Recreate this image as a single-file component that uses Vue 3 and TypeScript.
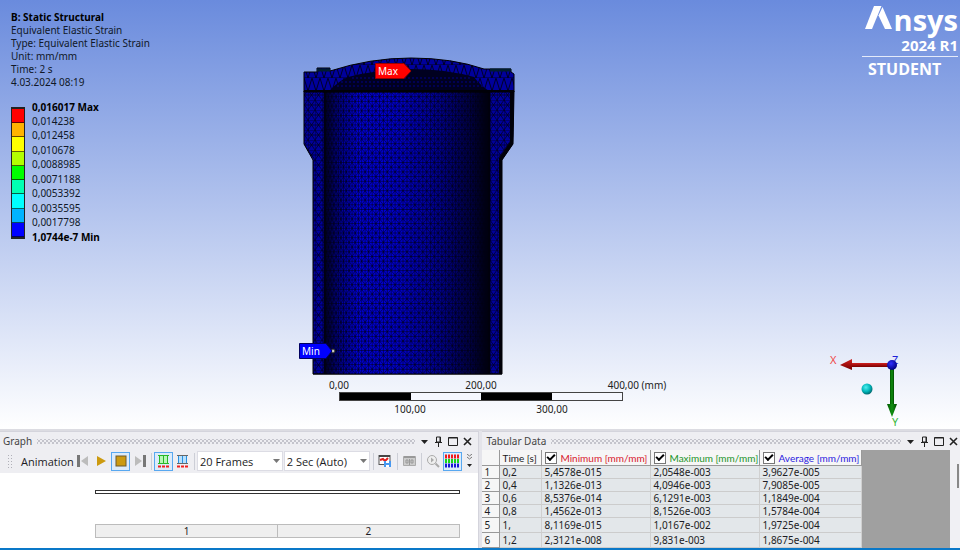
<script setup lang="ts">
import { ref } from 'vue'

interface Band { color: string; label: string }
interface Row { time: string; min: string; max: string; avg: string }

const bands: Band[] = [
  { color: '#ff0000', label: '0,014238' },
  { color: '#ffb300', label: '0,012458' },
  { color: '#ffff00', label: '0,010678' },
  { color: '#b3ff00', label: '0,0088985' },
  { color: '#00ff00', label: '0,0071188' },
  { color: '#00ffb3', label: '0,0053392' },
  { color: '#00ffff', label: '0,0035595' },
  { color: '#00b3ff', label: '0,0017798' },
  { color: '#0000ff', label: '' },
]

const rows: Row[] = [
  { time: '0,2', min: '5,4578e-015', max: '2,0548e-003', avg: '3,9627e-005' },
  { time: '0,4', min: '1,1326e-013', max: '4,0946e-003', avg: '7,9085e-005' },
  { time: '0,6', min: '8,5376e-014', max: '6,1291e-003', avg: '1,1849e-004' },
  { time: '0,8', min: '1,4562e-013', max: '8,1526e-003', avg: '1,5784e-004' },
  { time: '1,', min: '8,1169e-015', max: '1,0167e-002', avg: '1,9725e-004' },
  { time: '1,2', min: '2,3121e-008', max: '9,831e-003', avg: '1,8675e-004' },
]

const frames = ref('20 Frames')
const duration = ref('2 Sec (Auto)')
const showMin = ref(true)
const showMax = ref(true)
const showAvg = ref(true)

// Triangle mesh over the inside of a half cylinder; columns crowd towards its edges.
function cylinderMesh(left: number, right: number, top: number, bottom: number): string {
  const cols = 56
  const count = 60
  const step = (bottom - top) / count
  const width = right - left
  const x = (i: number) => {
    const t = Math.min(Math.max(i, 0), cols) / cols
    const round = (1 - Math.cos(Math.PI * t)) / 2
    return (left + width * (0.6 * round + 0.4 * t)).toFixed(1)
  }
  let d = ''
  for (let k = 0; k < count; k++) {
    const y = top + k * step
    d += `M${left} ${y.toFixed(1)}H${right}`
    for (const dir of [0, 1]) {
      for (let i = (k + dir) % 2; i < cols; i += 2) {
        const from = dir === 0 ? y : y + step
        const to = dir === 0 ? y + step : y
        d += `M${x(i)} ${from.toFixed(1)}L${x(i + 1)} ${to.toFixed(1)}`
      }
    }
  }
  for (let i = 0; i <= cols; i += 1) d += `M${x(i)} ${top}V${bottom}`
  return d
}

const innerMesh = cylinderMesh(324, 490, 92, 374)
</script>

<template>
  <div class="app">
    <main class="scene">
      <section class="info">
        <h1>B: Static Structural</h1>
        <p>Equivalent Elastic Strain</p>
        <p>Type: Equivalent Elastic Strain</p>
        <p>Unit: mm/mm</p>
        <p>Time: 2 s</p>
        <p>4.03.2024 08:19</p>
        <div class="legend">
          <div class="ramp">
            <span v-for="b in bands" :key="b.color" :style="{ background: b.color }"></span>
          </div>
          <ul>
            <li class="strong">0,016017 Max</li>
            <li v-for="b in bands.slice(0, 8)" :key="b.label">{{ b.label }}</li>
            <li class="strong">1,0744e-7 Min</li>
          </ul>
        </div>
      </section>

      <header class="brand">
        <div class="logo">
          <svg width="29" height="24" viewBox="0 0 29 24" aria-hidden="true">
            <path d="M9 0H16.500L7 23H0Z" fill="#fff" />
            <path d="M17.500 1L27 23H20L13.500 9.500Z" fill="#fff" />
          </svg>
          <span>nsys</span>
        </div>
        <div class="release">2024 R1</div>
        <div class="edition">STUDENT</div>
      </header>

      <div class="model">
        <svg width="220" height="324" viewBox="298 54 220 324" aria-hidden="true">
          <defs>
            <pattern id="tri" width="7" height="10" patternUnits="userSpaceOnUse">
              <path d="M0 0L3.500 5L7 0M0 10L3.500 5L7 10M0 0H7M0 5H7M0 0V10" fill="none" stroke="#000018" stroke-width="0.7" />
            </pattern>
            <pattern id="tall" width="8" height="13" patternUnits="userSpaceOnUse">
              <path d="M0 0L4 13L8 0M0 13H8" fill="none" stroke="#000018" stroke-width="0.9" />
            </pattern>
            <linearGradient id="shade" x1="0" x2="1">
              <stop offset="0" stop-color="#000030" />
              <stop offset="0.07" stop-color="#000088" />
              <stop offset="0.2" stop-color="#0000dc" />
              <stop offset="0.45" stop-color="#0000cc" />
              <stop offset="0.7" stop-color="#000090" />
              <stop offset="0.9" stop-color="#000044" />
              <stop offset="1" stop-color="#000004" />
            </linearGradient>
          </defs>
          <path d="M304 91H514L513 144L502 160V374H313V160L304 144Z" fill="#00009c" />
          <path d="M304 91H514L513 144L502 160V374H313V160L304 144Z" fill="url(#tri)" stroke="#000" />
          <path d="M510 91H514L513 144L502 160V374H499V158L510 142Z" fill="#000008" />
          <rect x="324" y="91" width="166" height="283" fill="url(#shade)" />
          <path :d="innerMesh" fill="none" stroke="#000014" stroke-width="0.55" />
          <path d="M325 91V374" stroke="#00000c" stroke-opacity="0.6" stroke-width="2" />
          <path d="M489 91V374" stroke="#00000c" stroke-width="2" />
          <path d="M304 92V72H317V68H330V71Q370 58 411 58Q452 58 484 69H511V72L514 74V92Z" fill="#00009c" />
          <path d="M304 92V72H317V68H330V71Q370 58 411 58Q452 58 484 69H511V72L514 74V92Z" fill="url(#tall)" stroke="#000" />
          <path d="M329 91Q340 80 348 77Q380 69 411 69Q445 69 474 77Q480 85 489 91Z" fill="#000020" />
          <path d="M337 86H483M341 82H478M352 78H470" stroke="#000064" stroke-width="1.500" stroke-dasharray="2 2" />
          <path d="M317 70H330M490 70H511" stroke="#001c30" stroke-width="3" />
          <path d="M304 91H514" stroke="#000008" stroke-width="2" />
          <path d="M313 374H502" stroke="#000008" stroke-width="1" />
          <circle cx="333" cy="351" r="2" fill="#cfcfc0" stroke="#222" />
        </svg>
        <span class="tag max"><svg width="38" height="17" viewBox="0 0 38 17" aria-hidden="true"><path d="M.5.5H29L36 8L29 15.500H.5Z" fill="#f00" stroke="#900" /></svg><b>Max</b></span>
        <span class="tag min"><svg width="38" height="17" viewBox="0 0 38 17" aria-hidden="true"><path d="M.5.5H27L33 8L27 15.500H.5Z" fill="#00f" stroke="#000060" /></svg><b>Min</b></span>
      </div>

      <div class="scale">
        <div class="ticks above"><span>0,00</span><span>200,00</span><span>400,00 (mm)</span></div>
        <div class="ruler"><i></i><i></i><i></i><i></i></div>
        <div class="ticks below"><span>100,00</span><span>300,00</span></div>
      </div>

      <svg class="triad" width="76" height="76" viewBox="826 352 76 76" aria-label="Axes">
        <defs>
          <radialGradient id="ball" cx="0.4" cy="0.35" r="0.65"><stop offset="0" stop-color="#4ff0f0" /><stop offset="0.6" stop-color="#00b4b8" /><stop offset="1" stop-color="#006a70" /></radialGradient>
          <radialGradient id="hub" cx="0.4" cy="0.35" r="0.65"><stop offset="0" stop-color="#3030ff" /><stop offset="1" stop-color="#000080" /></radialGradient>
          <linearGradient id="redbar" x1="0" x2="0" y1="0" y2="1"><stop offset="0" stop-color="#d02020" /><stop offset="1" stop-color="#780000" /></linearGradient>
          <linearGradient id="greenbar" x1="0" x2="1"><stop offset="0" stop-color="#005800" /><stop offset="0.5" stop-color="#109010" /><stop offset="1" stop-color="#004800" /></linearGradient>
        </defs>
        <text x="830" y="364" font-size="11" fill="#f04848">X</text>
        <text x="892" y="364" font-size="11" fill="#2020d8">Z</text>
        <text x="892" y="426" font-size="11" fill="#38b838">Y</text>
        <rect x="850" y="363" width="40" height="4" fill="url(#redbar)" />
        <path d="M840 365L852 359V370Z" fill="url(#redbar)" />
        <rect x="890" y="368" width="4" height="38" fill="url(#greenbar)" />
        <path d="M887 404H897L892 417Z" fill="url(#greenbar)" />
        <circle cx="892" cy="365" r="5" fill="url(#hub)" />
        <circle cx="867" cy="389" r="5.500" fill="url(#ball)" />
      </svg>
    </main>

    <div class="dock">
      <section class="panel graph">
        <header class="caption">
          <h2>Graph</h2><span class="dots"></span>
          <button type="button" aria-label="Window position"><svg width="9" height="11" viewBox="0 0 9 11"><path d="M1 4H8L4.500 8Z" fill="#222" /></svg></button>
          <button type="button" aria-label="Auto hide"><svg width="9" height="11" viewBox="0 0 9 11"><path d="M2.500 1H6.500V6H2.500ZM1 6.500H8M4.500 7V11M6 1V6" fill="none" stroke="#222" /></svg></button>
          <button type="button" aria-label="Maximize"><svg width="10" height="11" viewBox="0 0 10 11"><path d="M.5 2H9.500M.5 1.500V9.500H9.500V1.500Z" fill="none" stroke="#222" /></svg></button>
          <button type="button" aria-label="Close"><svg width="9" height="11" viewBox="0 0 9 11"><path d="M1 2L8 9M8 2L1 9" stroke="#222" stroke-width="1.600" /></svg></button>
        </header>
        <div class="toolbar">
          <span class="grip"></span>
          <span class="name">Animation</span>
          <button type="button" aria-label="First frame"><svg width="12" height="12" viewBox="0 0 12 12"><path d="M0 0H3V12H0Z" fill="#777" /><path d="M11 1V11L4 6Z" fill="#bcbcbc" /></svg></button>
          <button type="button" aria-label="Play"><svg width="12" height="12" viewBox="0 0 12 12"><path d="M1 1V11L10 6Z" fill="#cc9a10" /></svg></button>
          <button type="button" class="on" aria-label="Stop"><svg width="12" height="12" viewBox="0 0 12 12"><rect x="1" y="1" width="10" height="10" fill="#cc9a10" stroke="#6e5a2c" /></svg></button>
          <button type="button" aria-label="Last frame"><svg width="12" height="12" viewBox="0 0 12 12"><path d="M9 0H12V12H9Z" fill="#777" /><path d="M1 1V11L8 6Z" fill="#bcbcbc" /></svg></button>
          <i class="sep"></i>
          <button type="button" class="on" aria-label="Distributed"><svg width="13" height="14" viewBox="0 0 13 14"><rect x="2" y="1" width="9" height="9" fill="#b8f8b8" /><path d="M1 1.500H12M1 9.500H12M2.500 1V10M6.500 1V10M10.500 1V10" stroke="#28b828" fill="none" /><path d="M1 12.500H12" stroke="#f02020" stroke-width="2" stroke-dasharray="3 1" /></svg></button>
          <button type="button" aria-label="Result sets"><svg width="13" height="14" viewBox="0 0 13 14"><rect x="2" y="1" width="9" height="9" fill="#b8e0fc" /><path d="M2.500 1V10M6.500 1V10M10.500 1V10" stroke="#2890e0" /><path d="M1 1.500H12M1 9.500H12" stroke="#666" /><path d="M1 12.500H12" stroke="#f02020" stroke-width="2" stroke-dasharray="3 1" /></svg></button>
          <i class="sep"></i>
          <label class="pick"><select v-model="frames" aria-label="Frames"><option>20 Frames</option></select><svg width="7" height="4" viewBox="0 0 7 4"><path d="M0 0H7L3.500 4Z" fill="#777" /></svg></label>
          <label class="pick"><select v-model="duration" aria-label="Duration"><option>2 Sec (Auto)</option></select><svg width="7" height="4" viewBox="0 0 7 4"><path d="M0 0H7L3.500 4Z" fill="#777" /></svg></label>
          <i class="sep"></i>
          <button type="button" aria-label="Export video"><svg width="14" height="14" viewBox="0 0 14 14"><rect x="1" y="1.500" width="11" height="9" fill="#fff" stroke="#555" /><path d="M1 2H12" stroke="#444" stroke-width="2" /><path d="M2 6L5 5L7 7L10 4" stroke="#e02020" stroke-width="2" fill="none" /><path d="M6 7H13V13H6Z" fill="#4898f0" /><path d="M8 7V9H11V7M8 13V11H11V13" fill="#fff" /></svg></button>
          <i class="sep"></i>
          <button type="button" aria-label="Update contour range"><svg width="13" height="12" viewBox="0 0 13 12"><path d="M.5 1.500H12.500V10.500H.5Z" fill="#ccc" stroke="#aaa" /><path d="M1 2H12" stroke="#999" stroke-width="2" /><path d="M3 5H5V8H3ZM8 5H10V8H8ZM6.500 4V10" fill="none" stroke="#999" /></svg></button>
          <i class="sep"></i>
          <button type="button" aria-label="Zoom to fit"><svg width="14" height="14" viewBox="0 0 14 14"><circle cx="6" cy="6" r="4.500" fill="#eee" stroke="#aaa" /><path d="M9.500 9.500L13 13" stroke="#aaa" stroke-width="2" /><path d="M5 3.500V8.500L8 6Z" fill="#aaa" /></svg></button>
          <button type="button" class="on" aria-label="Contours"><svg width="14" height="14" viewBox="0 0 14 14"><g stroke-width="4" stroke-dasharray="2 1"><path d="M0 2.500H14" stroke="#f01818" /><path d="M0 7H14" stroke="#18d818" /><path d="M0 11.500H14" stroke="#1818d8" /></g></svg></button>
          <button type="button" class="more" aria-label="More"><svg width="7" height="14" viewBox="0 0 7 14"><path d="M1 0L3.500 2L6 0M1 3L3.500 5L6 3" fill="none" stroke="#777" /><path d="M1 10H6L3.500 13Z" fill="#222" /></svg></button>
        </div>
        <div class="timeline">
          <div class="track"></div>
          <div class="steps"><span>1</span><span>2</span></div>
        </div>
      </section>

      <section class="panel tabular">
        <header class="caption">
          <h2>Tabular Data</h2><span class="dots"></span>
          <button type="button" aria-label="Window position"><svg width="9" height="11" viewBox="0 0 9 11"><path d="M1 4H8L4.500 8Z" fill="#222" /></svg></button>
          <button type="button" aria-label="Auto hide"><svg width="9" height="11" viewBox="0 0 9 11"><path d="M2.500 1H6.500V6H2.500ZM1 6.500H8M4.500 7V11M6 1V6" fill="none" stroke="#222" /></svg></button>
          <button type="button" aria-label="Maximize"><svg width="10" height="11" viewBox="0 0 10 11"><path d="M.5 2H9.500M.5 1.500V9.500H9.500V1.500Z" fill="none" stroke="#222" /></svg></button>
          <button type="button" aria-label="Close"><svg width="9" height="11" viewBox="0 0 9 11"><path d="M1 2L8 9M8 2L1 9" stroke="#222" stroke-width="1.600" /></svg></button>
        </header>
        <div class="sheet">
          <table>
            <colgroup><col class="c0" /><col class="c1" /><col class="c2" /><col class="c3" /><col class="c4" /></colgroup>
            <thead>
              <tr>
                <th></th>
                <th>Time [s]</th>
                <th class="red"><label><input v-model="showMin" type="checkbox" />Minimum [mm/mm]</label></th>
                <th class="green"><label><input v-model="showMax" type="checkbox" />Maximum [mm/mm]</label></th>
                <th class="blue"><label><input v-model="showAvg" type="checkbox" />Average [mm/mm]</label></th>
              </tr>
            </thead>
            <tbody>
              <tr v-for="(r, i) in rows" :key="r.time">
                <th>{{ i + 1 }}</th>
                <td>{{ r.time }}</td>
                <td>{{ r.min }}</td>
                <td>{{ r.max }}</td>
                <td>{{ r.avg }}</td>
              </tr>
            </tbody>
          </table>
          <div class="empty"></div>
          <div class="scroll"><span></span></div>
        </div>
      </section>
    </div>
  </div>
</template>

<style>
body { margin: 0; }
</style>

<style scoped>
* { box-sizing: border-box; }
.app {
  display: flex;
  flex-direction: column;
  height: 100vh;
  overflow: hidden;
  font-family: "Noto Sans", "Open Sans", sans-serif;
  font-size: 10px;
  line-height: 13px;
  color: #1c1c24;
  border-bottom: 2px solid #0a78c8;
  background: #eeeef2;
}
h1, h2, p, ul { margin: 0; padding: 0; font-size: inherit; font-weight: 400; }
ul { list-style: none; }
button { border: 0; padding: 0; margin: 0; background: none; display: flex; align-items: center; justify-content: center; }
svg { display: block; flex: none; }

.scene {
  position: relative;
  flex: 1;
  min-height: 0;
  overflow: hidden;
  background: linear-gradient(#6a8bdd, #ffffff);
}
.info { padding: 11px; color: #101828; }
.info h1, .strong { font-weight: 700; color: #000; }
.legend { display: flex; gap: 7px; margin-top: 12px; }
.ramp { width: 14px; height: 132px; margin-top: 6px; display: flex; flex-direction: column; border: 1px solid #222; border-width: 2px 1px; }
.ramp span { flex: 1; border-bottom: 1px solid rgba(0, 0, 0, 0.6); }
.legend ul { display: grid; grid-template-rows: 14px; grid-auto-rows: 1fr; height: 144px; }
.legend li { line-height: 12px; }

.brand { position: absolute; top: 6px; right: 2px; width: 96px; color: #fff; font-family: "Open Sans", sans-serif; font-weight: 700; }
.logo { display: flex; justify-content: flex-end; font-size: 29px; line-height: 28px; }
.release { font-size: 15px; line-height: 22px; text-align: right; border-bottom: 1px solid #e4eafa; }
.edition { font-size: 16px; line-height: 24px; padding-left: 6px; }

.model { position: absolute; top: 54px; left: calc(50% - 182px); }
.tag { position: absolute; color: #fff; }
.tag b { position: absolute; left: 3px; top: 2px; font-weight: 400; }
.max { left: 77px; top: 9px; }
.min { left: 1px; top: 289px; }

.scale { position: absolute; bottom: 12px; left: calc(50% - 141px); width: 284px; color: #222; }
.ruler { display: flex; height: 9px; border: 1px solid #444; background: #f6f8ff; }
.ruler i { flex: 1; }
.ruler i:nth-child(odd) { background: #000; }
.ticks { display: grid; justify-items: center; }
.ticks span { white-space: nowrap; }
.above { grid-template-columns: repeat(3, 142px); margin-left: -71px; line-height: 13px; }
.above span:last-child { margin-left: 28px; }
.below { grid-template-columns: 1fr 1fr; line-height: 16px; }
.triad { position: absolute; right: 58px; bottom: 1px; overflow: visible; }

.dock { display: grid; grid-template-columns: 1fr 1fr; gap: 3px; height: 119px; background: #e4e4ea; border-top: 2px solid #dcdce2; }
.panel { display: flex; flex-direction: column; min-width: 0; min-height: 0; overflow: hidden; background: #eeeef2; border-right: 1px solid #d4d4dc; border-top: 1px solid #d4d4dc; }
.tabular { border-right: 0; }
.caption { display: flex; align-items: center; gap: 5px; height: 18px; flex: none; padding: 0 6px 0 3px; color: #444; }
.tabular .caption { padding: 0 2px 0 5px; }
.dots { flex: 1; height: 5px; background-image: radial-gradient(circle, #c4c4cc 1px, transparent 1px), radial-gradient(circle, #c4c4cc 1px, transparent 1px); background-size: 4px 4px; background-position: 0 0, 2px 2px; }
.toolbar { display: flex; align-items: center; height: 23px; flex: none; padding: 0 0 1px 7px; }
.toolbar button { width: 19px; height: 19px; flex: none; }
.toolbar button.on { border: 1px solid #58a8f0; background: #dcebfa; }
.grip { width: 6px; height: 15px; background-image: radial-gradient(circle, #b0b0b8 1px, transparent 1px); background-size: 3px 3px; }
.name { width: 60px; padding-left: 8px; font: 10px "Open Sans", sans-serif; font-size: 10px; }
.sep { width: 1px; height: 17px; margin: 0 2px; background: #ccced6; flex: none; }
.pick { position: relative; flex: 1; height: 20px; margin-right: 1px; }
.pick select { appearance: none; width: 100%; height: 100%; padding: 0 0 0 2px; border: 1px solid #dcdce4; border-radius: 0; background: #fff; color: #1c1c24; font: 10px "Noto Sans", sans-serif; }
.name, .pick select { font-size: 11px; font-family: "Open Sans", sans-serif; }
.pick svg { position: absolute; right: 3px; top: 8px; pointer-events: none; }
.toolbar .more { width: 16px; }
.timeline { flex: 1; background: #fff; padding: 17px 18px 0 95px; }
.track { height: 4px; border: 1px solid #333; }
.steps { display: grid; grid-template-columns: 1fr 1fr; margin-top: 30px; height: 14px; border: 1px solid #bcbcbc; background: #efefef; text-align: center; line-height: 13px; }
.steps span + span { border-left: 1px solid #bcbcbc; }

.sheet { display: flex; flex: 1; min-height: 0; overflow: hidden; align-items: stretch; background: #f0f0f4; }
table { border-collapse: separate; border-spacing: 0; table-layout: fixed; width: 380px; align-self: flex-start; flex: none; }
.c0 { width: 18px; }
.c1 { width: 42px; }
.c2 { width: 109px; }
.c3 { width: 109px; }
.c4 { width: 102px; }
th, td { height: 13px; padding: 0 0 0 3px; line-height: 12px; text-align: left; font-weight: 400; white-space: nowrap; border-right: 1px solid #d0d0d0; border-bottom: 1px solid #ccc; background: #e3e7ea; overflow: hidden; }
thead th { height: 16px; padding-left: 3px; background: #f6f6f6; border-color: #999; font-family: Lato, sans-serif; }
tbody th { background: #f6f6f6; border-color: #999; }
tbody tr:nth-child(n + 5) > * { height: 15px; }
th label { display: flex; align-items: center; gap: 4px; }
input { appearance: none; flex: none; width: 12px; height: 12px; margin: 0; border: 1px solid #777; background: #fff; display: grid; place-items: center; }
input:checked::after { content: ""; width: 6px; height: 3px; border: solid #000; border-width: 0 0 2px 2px; transform: rotate(-45deg); margin-bottom: 2px; }
.red { color: #d8182c; }
.green { color: #209428; }
.blue { color: #2c1ce0; }
.empty { flex: 1; background: #a0a0a0; }
.scroll { width: 10px; padding: 14px 0 0 7px; }
.scroll span { display: block; width: 2px; height: 24px; background: #888; }
</style>
